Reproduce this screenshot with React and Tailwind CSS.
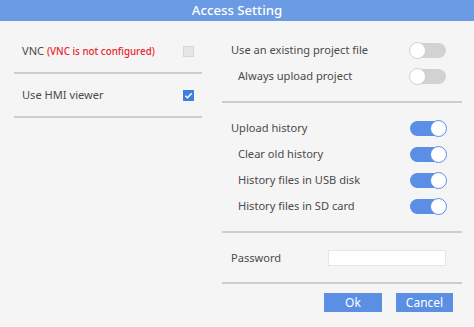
import React from "react";

const Toggle = ({ on }) => (
  <div
    className={`relative w-[36px] h-[15px] rounded-full ${
      on ? "bg-[#5b8ee5]" : "bg-[#d2d2d2]"
    }`}
  >
    <div
      className={`absolute top-[-1px] w-[17px] h-[17px] rounded-full bg-white border ${
        on ? "right-[-1px] border-[#5b8ee5]" : "left-[-1px] border-[#cfcfcf]"
      }`}
    ></div>
  </div>
);

const Checkbox = ({ checked }) =>
  checked ? (
    <div className="w-[11px] h-[11px] bg-[#3f7fdc] flex items-center justify-center">
      <svg width="9" height="9" viewBox="0 0 10 10">
        <path d="M1.5 5.2 L4 7.5 L8.5 2.5" stroke="white" strokeWidth="1.6" fill="none" />
      </svg>
    </div>
  ) : (
    <div className="w-[11px] h-[11px] bg-[#e6e6e6] border border-[#d6d6d6]"></div>
  );

const Divider = ({ className = "" }) => (
  <div className={`h-[2px] bg-[#cdcdcd] ${className}`}></div>
);

const Row = ({ label, indent, children }) => (
  <div
    className={`h-[26px] flex items-center justify-between pr-[16px] ${
      indent ? "pl-[16px]" : "pl-[9px]"
    }`}
  >
    <span>{label}</span>
    {children}
  </div>
);

export default function App() {
  return (
    <div
      className="w-[474px] h-[327px] bg-[#f5f5f5] text-[#4a4a4a] text-[11.1px] overflow-hidden"
      style={{ fontFamily: '"Noto Sans", "Open Sans", sans-serif' }}
    >
      <div className="h-[21px] bg-[#6a9be4] flex items-center justify-center text-white text-[13.2px] font-medium">
        Access Setting
      </div>
      <div className="flex">
        {/* left column */}
        <div className="ml-[14px] w-[188px] pt-[17px]">
          <div className="h-[26px] flex items-center justify-between pl-[8px] pr-[8px]">
            <span>
              VNC{" "}
              <span className="text-[#e8262b] text-[9.8px] font-medium">
                (VNC is not configured)
              </span>
            </span>
            <Checkbox />
          </div>
          <Divider className="mt-[8px]" />
          <div className="h-[26px] mt-[8px] flex items-center justify-between pl-[8px] pr-[8px]">
            <span>Use HMI viewer</span>
            <Checkbox checked />
          </div>
          <Divider className="mt-[8px]" />
        </div>

        {/* right column */}
        <div className="ml-[20px] w-[240px] pt-[16px]">
          <Row label="Use an existing project file">
            <Toggle />
          </Row>
          <Row label="Always upload project" indent>
            <Toggle />
          </Row>
          <Divider className="mt-[12px]" />
          <div className="mt-[12px]">
            <Row label="Upload history">
              <Toggle on />
            </Row>
            <Row label="Clear old history" indent>
              <Toggle on />
            </Row>
            <Row label="History files in USB disk" indent>
              <Toggle on />
            </Row>
            <Row label="History files in SD card" indent>
              <Toggle on />
            </Row>
          </div>
          <Divider className="mt-[12px]" />
          <div className="h-[26px] mt-[12px] flex items-center pl-[9px] pr-[16px]">
            <span className="w-[97px]">Password</span>
            <input
              type="password"
              className="w-[118px] h-[16px] bg-white border border-[#e6e6e6] outline-none"
            />
          </div>
          <Divider className="mt-[11px]" />
          <div className="mt-[9px] flex justify-end gap-[14px] pr-[9px]">
            <button className="w-[58px] h-[19px] bg-[#5a8fe3] text-white text-[12px] leading-none">
              Ok
            </button>
            <button className="w-[57px] h-[19px] bg-[#5a8fe3] text-white text-[12px] leading-none">
              Cancel
            </button>
          </div>
        </div>
      </div>
    </div>
  );
}
